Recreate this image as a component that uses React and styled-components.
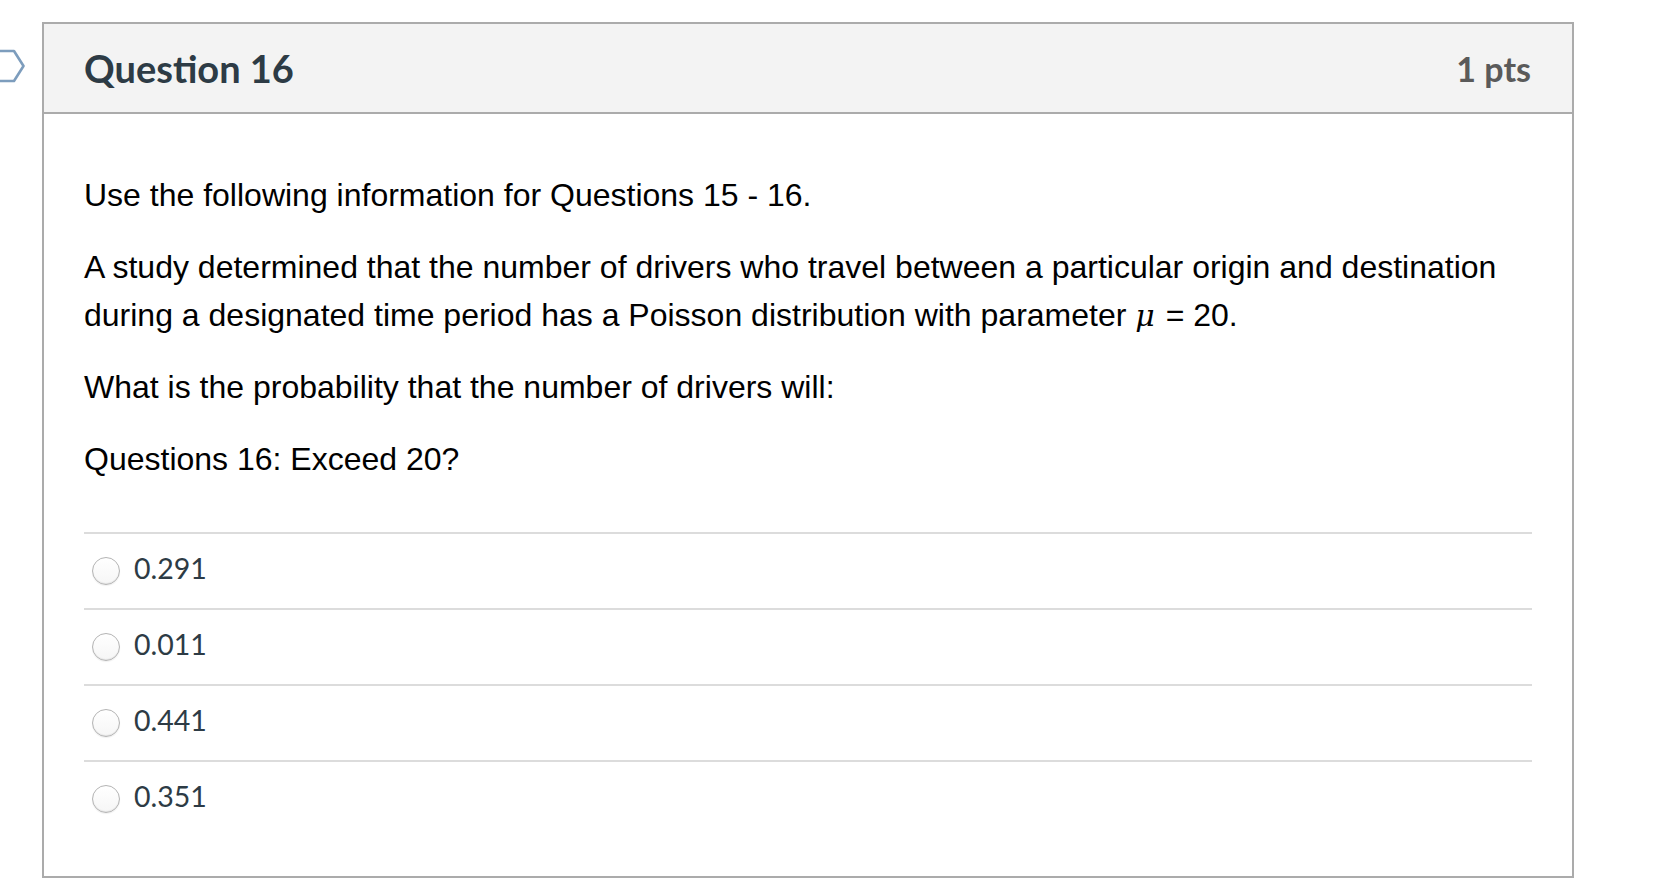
import React from 'react'
import styled, { createGlobalStyle } from 'styled-components'

const GlobalStyle = createGlobalStyle`
  body {
    margin: 0;
    background: #fff;
  }
`

const Page = styled.div`
  display: flex;
  align-items: flex-start;
  padding-top: 22px;
`

const Gutter = styled.div`
  width: 42px;
  flex-shrink: 0;
  padding-top: 26px;
  overflow: hidden;
`

const Card = styled.section`
  width: 1532px;
  box-sizing: border-box;
  border: 2px solid #ababab;
  background: #fff;
`

const Header = styled.header`
  display: flex;
  justify-content: space-between;
  align-items: center;
  height: 88px;
  padding: 0 41px 0 40px;
  background: #f3f3f3;
  border-bottom: 2px solid #ababab;
  font-family: Lato, 'Open Sans', sans-serif;
  font-weight: 700;
`

const Title = styled.h2`
  margin: 0;
  font-size: 38px;
  font-weight: 700;
  color: #2d3b45;
`

const Points = styled.span`
  font-size: 34px;
  color: #5a5a5a;
`

const QuestionText = styled.div`
  padding: 33px 40px 25px;
  font-family: 'Liberation Sans', Arial, Helvetica, sans-serif;
  font-size: 32px;
  line-height: 48px;
  color: #000;

  p {
    margin: 24px 0;
  }
`

const Mu = styled.i`
  font-family: 'DejaVu Serif', 'Liberation Serif', serif;
  font-size: 30px;
  line-height: 1;
  margin-right: 2px;
`

const Answers = styled.div`
  margin: 0 40px;
  padding-bottom: 40px;
`

const Answer = styled.label`
  display: flex;
  align-items: center;
  height: 74px;
  padding-left: 8px;
  border-top: 2px solid #dcdcdc;
  font-family: Lato, 'Open Sans', sans-serif;
  font-size: 28.5px;
  color: #2d3b45;
`

const Radio = styled.span`
  width: 28px;
  height: 28px;
  border-radius: 50%;
  box-sizing: border-box;
  border: 1px solid #b4b4b4;
  background: linear-gradient(#ffffff, #f6f6f6);
  box-shadow: inset 0 -1px 1px rgba(0, 0, 0, 0.08), 0 1px 1px rgba(0, 0, 0, 0.06);
  margin-right: 14px;
  flex-shrink: 0;
`

const AnswerText = styled.span`
  margin-bottom: 7px;
`

function Flag() {
  return (
    <svg width="26" height="36" viewBox="0 0 26 36" style={{ display: 'block' }}>
      <path
        d="M-6 3 H14 L23.5 18 L14 33 H-6"
        fill="none"
        stroke="#7d9dbd"
        strokeWidth="2.6"
        strokeLinejoin="round"
      />
    </svg>
  )
}

const answers = ['0.291', '0.011', '0.441', '0.351']

export default function App() {
  return (
    <>
      <GlobalStyle />
      <Page>
        <Gutter>
          <Flag />
        </Gutter>
        <Card>
          <Header>
            <Title>Question 16</Title>
            <Points>1 pts</Points>
          </Header>
          <QuestionText>
            <p>Use the following information for Questions 15 - 16.</p>
            <p>
              A study determined that the number of drivers who travel between a particular origin and destination
              during a designated time period has a Poisson distribution with parameter <Mu>μ</Mu> = 20.
            </p>
            <p>What is the probability that the number of drivers will:</p>
            <p>Questions 16: Exceed 20?</p>
          </QuestionText>
          <Answers>
            {answers.map((a) => (
              <Answer key={a}>
                <Radio />
                <AnswerText>{a}</AnswerText>
              </Answer>
            ))}
          </Answers>
        </Card>
      </Page>
    </>
  )
}
